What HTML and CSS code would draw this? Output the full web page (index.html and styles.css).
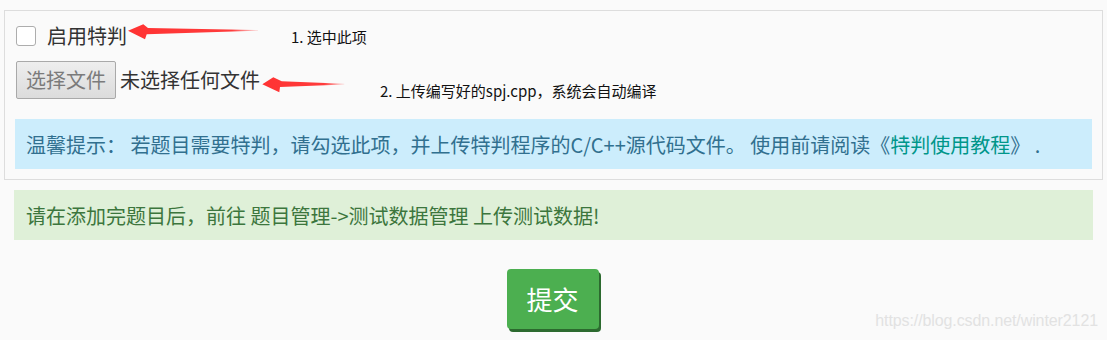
FILE: index.html
```html
<!DOCTYPE html>
<html lang="zh-CN">
<head>
<meta charset="utf-8">
<title>特判设置</title>
<link rel="stylesheet" href="styles.css">
</head>
<body>
<div class="panel">
  <div class="row row-check">
    <span class="checkbox"></span>
    <span class="check-label">启用特判</span>
    <svg class="arrow arrow-1" width="132" height="30" viewBox="0 0 132 30">
      <defs>
        <linearGradient id="fade1" x1="0" y1="0" x2="1" y2="0">
          <stop offset="0" stop-color="#ff3333"/>
          <stop offset="0.8" stop-color="#ff3b3b"/>
          <stop offset="1" stop-color="#ff3b3b" stop-opacity="0.15"/>
        </linearGradient>
      </defs>
      <polygon points="0,9.7 15.3,3.3 20,6.9 130,9.1 130,9.7 18.7,13.3 17,18.3" fill="url(#fade1)"/>
    </svg>
    <span class="note note-1">1. 选中此项</span>
  </div>
  <div class="row row-file">
    <span class="file-btn">选择文件</span>
    <span class="file-name">未选择任何文件</span>
    <svg class="arrow arrow-2" width="84" height="38" viewBox="0 0 84 38">
      <defs>
        <linearGradient id="fade2" x1="0" y1="0" x2="1" y2="0">
          <stop offset="0" stop-color="#ff3333"/>
          <stop offset="0.75" stop-color="#ff3b3b"/>
          <stop offset="1" stop-color="#ff3b3b" stop-opacity="0.15"/>
        </linearGradient>
      </defs>
      <polygon points="0.3,23.3 11.3,16.3 19.7,20.2 82.3,22.7 82.3,23.4 18,25.9 17.3,31.3" fill="url(#fade2)"/>
    </svg>
    <span class="note note-2">2. 上传编写好的spj.cpp，系统会自动编译</span>
  </div>
  <div class="alert alert-info">温馨提示： 若题目需要特判，请勾选此项，并上传特判程序的C/C++源代码文件。 使用前请阅读《<a class="link" href="#">特判使用教程</a>》 .</div>
</div>
<div class="alert alert-success">请在添加完题目后，前往 题目管理-&gt;测试数据管理 上传测试数据!</div>
<div class="actions">
  <button class="submit" type="button">提交</button>
</div>
<div class="watermark">https://blog.csdn.net/winter2121</div>
</body>
</html>
```

FILE: styles.css
```css
html, body {
  margin: 0;
  padding: 0;
}

body {
  position: relative;
  background: #fafafa;
  min-height: 340px;
  padding-top: 10px;
  box-sizing: border-box;
  font-family: "Noto Sans CJK SC", "Noto Sans", sans-serif;
  color: #333;
  overflow: hidden;
}

.panel {
  margin: 0 4px;
  border: 1px solid #dddddd;
  padding: 10px;
}

.row {
  display: flex;
  align-items: center;
}

.row-check {
  height: 30px;
}

.checkbox {
  width: 20px;
  height: 20px;
  box-sizing: border-box;
  border: 1px solid #adadad;
  border-radius: 3px;
  background: #fff;
  margin-left: 1px;
  flex: none;
}

.check-label {
  margin-left: 11px;
  font-size: 20px;
  line-height: 30px;
  color: #333;
}

.arrow {
  flex: none;
  display: block;
}

.arrow-1 {
  margin-left: 1px;
}

.note {
  font-size: 15px;
  line-height: 20px;
  color: #111;
}

.note-1 {
  margin-left: 31px;
  margin-top: 2px;
}

.row-file {
  height: 38px;
  margin-top: 10px;
}

.file-btn {
  width: 100px;
  height: 38px;
  box-sizing: border-box;
  margin-left: 1px;
  border: 1px solid #a9a9a9;
  border-radius: 2px;
  background: linear-gradient(#eeeeee, #dcdcdc);
  color: #7b7b7b;
  font-size: 20px;
  line-height: 36px;
  text-align: center;
  flex: none;
}

.file-name {
  margin-left: 4px;
  font-size: 20px;
  line-height: 38px;
  color: #333;
}

.arrow-2 {
  margin-left: 2px;
}

.note-2 {
  margin-left: 34px;
  align-self: flex-end;
  margin-bottom: -2px;
}

.alert {
  height: 50px;
  display: flex;
  align-items: center;
  font-size: 20px;
  white-space: pre;
}

.alert-info {
  margin-top: 20px;
  padding: 0 11px;
  background: #ccedfc;
  color: #31708f;
}

.link {
  color: #00968a;
  text-decoration: none;
}

.alert-success {
  margin: 10px 14px 0;
  padding: 0 12px;
  background: #dff0d8;
  color: #3c763d;
}

.actions {
  display: flex;
  justify-content: center;
  margin-top: 29px;
}

.submit {
  width: 92px;
  height: 60px;
  border: none;
  border-radius: 4px;
  background: #4caf50;
  color: #fff;
  font-family: "Noto Sans CJK SC", sans-serif;
  font-size: 26px;
  line-height: 60px;
  padding: 0;
  box-shadow: 2px 3px 0 #2c6a2f;
  margin-left: -2px;
}

.watermark {
  position: absolute;
  right: 9px;
  top: 313px;
  font-family: "Liberation Sans", Arial, sans-serif;
  font-size: 16px;
  line-height: 16px;
  color: #e2e2e2;
  letter-spacing: -0.1px;
}
```
